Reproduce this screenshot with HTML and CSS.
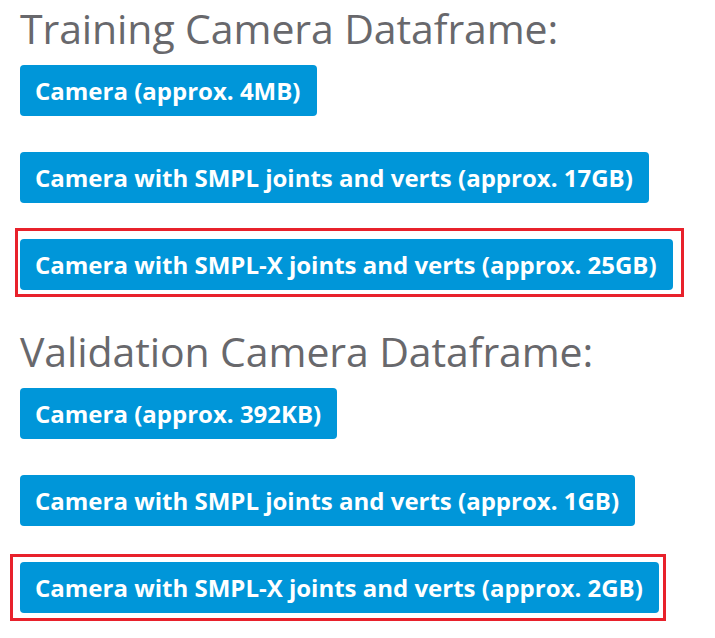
FILE: index.html
```html
<!DOCTYPE html>
<html>
<head>
<meta charset="utf-8">
<link rel="stylesheet" href="styles.css">
</head>
<body>
<main class="page">
  <section class="group group-train">
    <h2 class="title">Training Camera Dataframe:</h2>
    <div class="buttons">
      <a class="btn">Camera (approx. 4MB)</a>
      <a class="btn">Camera with SMPL joints and verts (approx. 17GB)</a>
      <a class="btn marked marked-a">Camera with SMPL-X joints and verts (approx. 25GB)</a>
    </div>
  </section>
  <section class="group group-val">
    <h2 class="title">Validation Camera Dataframe:</h2>
    <div class="buttons">
      <a class="btn">Camera (approx. 392KB)</a>
      <a class="btn">Camera with SMPL joints and verts (approx. 1GB)</a>
      <a class="btn marked marked-b">Camera with SMPL-X joints and verts (approx. 2GB)</a>
    </div>
  </section>
</main>
</body>
</html>
```
FILE: styles.css
```css
html, body {
  margin: 0;
  padding: 0;
  background: #ffffff;
}
.page {
  padding: 0 0 40px 20px;
  font-family: "Open Sans", "Noto Sans", sans-serif;
}
.group {
  display: flex;
  flex-direction: column;
}
.title {
  margin: 0;
  font-weight: 400;
  font-size: 41px;
  line-height: 56px;
  color: #68686c;
  letter-spacing: -0.1px;
}
.group-val .title {
  margin-top: 33px;
}
.buttons {
  display: flex;
  flex-direction: column;
  align-items: flex-start;
  gap: 36px;
  margin-top: 9px;
}
.btn {
  position: relative;
  display: inline-block;
  background: #0096d9;
  color: #ffffff;
  font-weight: 700;
  font-size: 24px;
  line-height: 51px;
  height: 51px;
  padding: 0 16px 0 15px;
  border-radius: 4px;
  white-space: nowrap;
}
.marked::after {
  content: "";
  position: absolute;
  border: 3px solid #e8212b;
}
.marked-a::after {
  top: -11px;
  left: -5px;
  right: -11px;
  bottom: -7px;
}
.marked-b::after {
  top: -8px;
  left: -10px;
  right: -7px;
  bottom: -8px;
}
```
